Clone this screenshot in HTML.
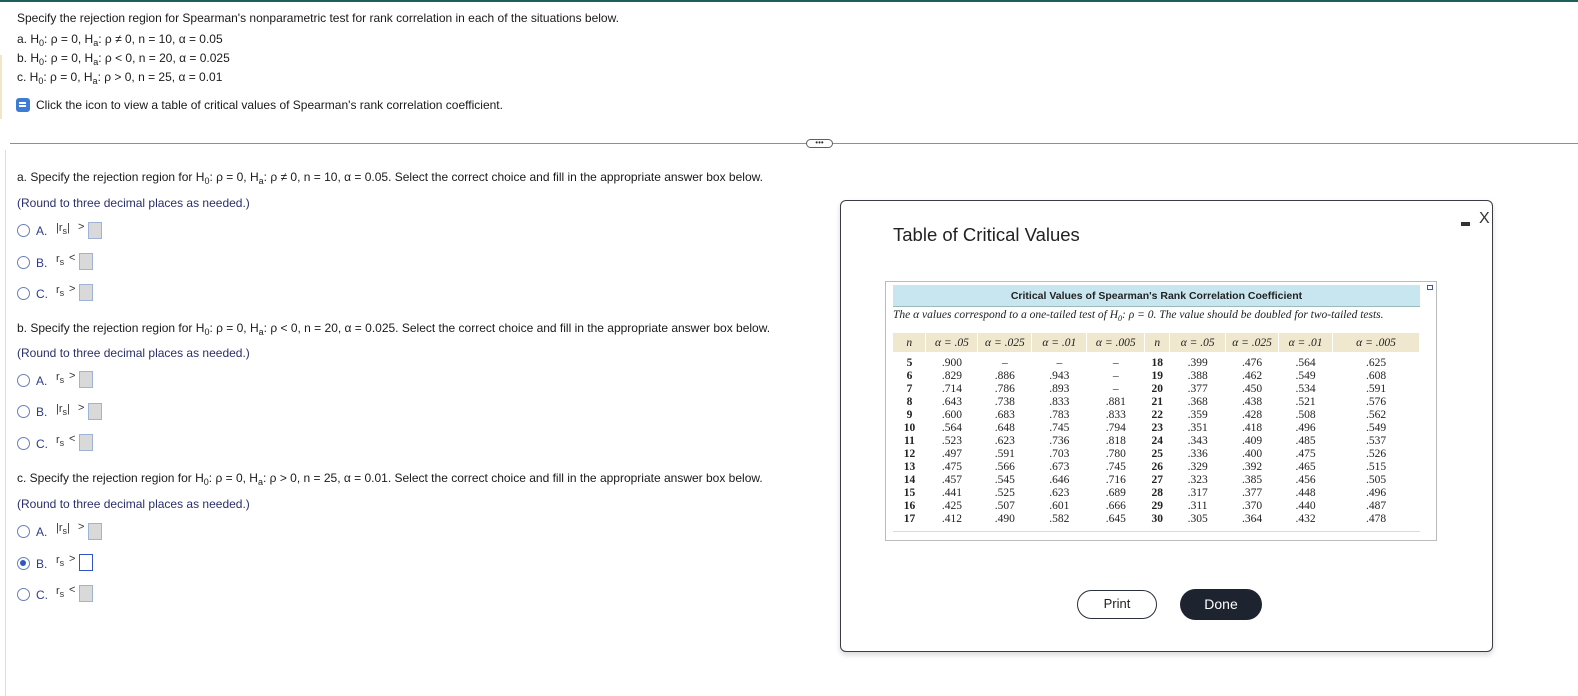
<!DOCTYPE html>
<html><head><meta charset="utf-8"><style>
*{margin:0;padding:0;box-sizing:border-box}
body{width:1578px;height:696px;position:relative;background:#fff;font-family:"Liberation Sans",Arial,sans-serif;font-size:12px;color:#1a1a1a;overflow:hidden}
.a{position:absolute;white-space:nowrap}
sub{font-size:9px;vertical-align:-3px}
.blue{color:#2a2f6a}
.radio{position:absolute;width:13px;height:13px;border:1.5px solid #6b7fb8;border-radius:50%}
.radio.on::after{content:"";position:absolute;left:2px;top:2px;width:6px;height:6px;border-radius:50%;background:#2f56c4}
.lbl{position:absolute;color:#2d3a8c;font-size:12px}
.box{position:absolute;width:14px;height:17px;background:#d9d9d9;border:1px solid #9fb3d6}
.box.w{background:#fff;border:1.5px solid #2f56c4}
.rs{position:absolute;font-size:11px;color:#333}
table{border-collapse:collapse;font-family:"Liberation Serif",serif;font-size:11.5px;color:#222}
td{text-align:center;padding:0;height:13px;line-height:13px}
th{font-weight:normal;font-style:italic;font-size:11.5px;height:19px;background:#efe8cf;border-right:1px solid #fff}
</style></head><body>
<div class="a" style="left:0;top:0;width:1578px;height:2px;background:#1f5f5a"></div>
<div class="a" style="left:0;top:55px;width:2px;height:64px;background:#f1e6c5"></div>
<div class="a" style="left:5px;top:150px;width:1px;height:546px;background:#ddd"></div>
<div class="a" style="left:17px;top:11px">Specify the rejection region for Spearman's nonparametric test for rank correlation in each of the situations below.</div>
<div class="a" style="left:17px;top:32px">a. H<sub>0</sub>: ρ = 0, H<sub>a</sub>: ρ ≠ 0, n = 10, α = 0.05</div>
<div class="a" style="left:17px;top:51px">b. H<sub>0</sub>: ρ = 0, H<sub>a</sub>: ρ &lt; 0, n = 20, α = 0.025</div>
<div class="a" style="left:17px;top:70px">c. H<sub>0</sub>: ρ = 0, H<sub>a</sub>: ρ &gt; 0, n = 25, α = 0.01</div>
<div class="a" style="left:16px;top:98px;width:14px;height:14px;background:#3f7ad6;border-radius:3px"><div style="margin:4px 3px;width:7px;height:1.5px;background:#fff;box-shadow:0 3px 0 #fff"></div></div>
<div class="a" style="left:36px;top:98px">Click the icon to view a table of critical values of Spearman's rank correlation coefficient.</div>
<div class="a" style="left:10px;top:143px;width:1568px;height:1px;background:#8a8f99"></div>
<div class="a" style="left:806px;top:139px;width:27px;height:9px;border:1px solid #56606e;border-radius:5px;background:#fff;font-size:8px;line-height:5px;text-align:center;color:#333">•••</div>

<div class="a" style="left:17px;top:170px">a. Specify the rejection region for H<sub>0</sub>: ρ = 0, H<sub>a</sub>: ρ ≠ 0, n = 10, α = 0.05. Select the correct choice and fill in the appropriate answer box below.</div>
<div class="a blue" style="left:17px;top:196px">(Round to three decimal places as needed.)</div>
<div class="radio" style="left:17px;top:224px"></div><div class="lbl" style="left:36px;top:224px">A.</div><div class="rs" style="left:56px;top:222px">|r<sub>s</sub>|</div><div class="rs" style="left:78px;top:221px">&gt;</div><div class="box" style="left:88px;top:222px"></div>
<div class="radio" style="left:17px;top:256px"></div><div class="lbl" style="left:36px;top:256px">B.</div><div class="rs" style="left:56px;top:253px">r<sub>s</sub></div><div class="rs" style="left:69px;top:252px">&lt;</div><div class="box" style="left:79px;top:253px"></div>
<div class="radio" style="left:17px;top:287px"></div><div class="lbl" style="left:36px;top:287px">C.</div><div class="rs" style="left:56px;top:284px">r<sub>s</sub></div><div class="rs" style="left:69px;top:283px">&gt;</div><div class="box" style="left:79px;top:284px"></div>
<div class="a" style="left:17px;top:321px">b. Specify the rejection region for H<sub>0</sub>: ρ = 0, H<sub>a</sub>: ρ &lt; 0, n = 20, α = 0.025. Select the correct choice and fill in the appropriate answer box below.</div>
<div class="a blue" style="left:17px;top:346px">(Round to three decimal places as needed.)</div>
<div class="radio" style="left:17px;top:374px"></div><div class="lbl" style="left:36px;top:374px">A.</div><div class="rs" style="left:56px;top:371px">r<sub>s</sub></div><div class="rs" style="left:69px;top:370px">&gt;</div><div class="box" style="left:79px;top:371px"></div>
<div class="radio" style="left:17px;top:405px"></div><div class="lbl" style="left:36px;top:405px">B.</div><div class="rs" style="left:56px;top:403px">|r<sub>s</sub>|</div><div class="rs" style="left:78px;top:402px">&gt;</div><div class="box" style="left:88px;top:403px"></div>
<div class="radio" style="left:17px;top:437px"></div><div class="lbl" style="left:36px;top:437px">C.</div><div class="rs" style="left:56px;top:434px">r<sub>s</sub></div><div class="rs" style="left:69px;top:433px">&lt;</div><div class="box" style="left:79px;top:434px"></div>
<div class="a" style="left:17px;top:471px">c. Specify the rejection region for H<sub>0</sub>: ρ = 0, H<sub>a</sub>: ρ &gt; 0, n = 25, α = 0.01. Select the correct choice and fill in the appropriate answer box below.</div>
<div class="a blue" style="left:17px;top:497px">(Round to three decimal places as needed.)</div>
<div class="radio" style="left:17px;top:525px"></div><div class="lbl" style="left:36px;top:525px">A.</div><div class="rs" style="left:56px;top:522px">|r<sub>s</sub>|</div><div class="rs" style="left:78px;top:521px">&gt;</div><div class="box" style="left:88px;top:523px"></div>
<div class="radio on" style="left:17px;top:557px"></div><div class="lbl" style="left:36px;top:557px">B.</div><div class="rs" style="left:56px;top:554px">r<sub>s</sub></div><div class="rs" style="left:69px;top:553px">&gt;</div><div class="box w" style="left:79px;top:554px"></div>
<div class="radio" style="left:17px;top:588px"></div><div class="lbl" style="left:36px;top:588px">C.</div><div class="rs" style="left:56px;top:585px">r<sub>s</sub></div><div class="rs" style="left:69px;top:584px">&lt;</div><div class="box" style="left:79px;top:585px"></div>

<div class="a" style="left:840px;top:200px;width:653px;height:452px;border:1px solid #3a3d44;border-radius:6px;background:#fff;box-shadow:0 3px 6px rgba(0,0,0,.15)"></div>
<div class="a" style="left:893px;top:224px;font-size:18.5px;color:#222">Table of Critical Values</div>
<div class="a" style="left:1461px;top:222px;width:9px;height:4px;background:#333"></div>
<div class="a" style="left:1479px;top:210px;font-size:16px;color:#333">X</div>
<div class="a" style="left:885px;top:281px;width:552px;height:260px;border:1px solid #bbb"></div>
<div class="a" style="left:1427px;top:285px;width:6px;height:5px;border:1px solid #3a57a8"></div>
<div class="a" style="left:893px;top:285px;width:527px;height:22px;background:#c8e6ef;border-bottom:1px solid #9bb;font-weight:bold;font-size:10.5px;text-align:center;line-height:22px;color:#222">Critical Values of Spearman's Rank Correlation Coefficient</div>
<div class="a" style="left:893px;top:309px;font-family:'Liberation Serif',serif;font-style:italic;font-size:11.5px;color:#222">The α values correspond to a one-tailed test of H<sub style="font-size:8px">0</sub>: ρ = 0. The value should be doubled for two-tailed tests.</div>
<table class="a" style="left:893px;top:333px;width:527px">
<tr><th style="width:33px">n</th><th style="width:52px">α = .05</th><th style="width:54px">α = .025</th><th style="width:55px">α = .01</th><th style="width:58px">α = .005</th><th style="width:25px">n</th><th style="width:56px">α = .05</th><th style="width:53px">α = .025</th><th style="width:54px">α = .01</th><th style="width:87px">α = .005</th></tr>
<tr><td colspan="10" style="height:5px"></td></tr>
<tr><td><b>5</b></td><td>.900</td><td>–</td><td>–</td><td>–</td><td><b>18</b></td><td>.399</td><td>.476</td><td>.564</td><td>.625</td></tr>
<tr><td><b>6</b></td><td>.829</td><td>.886</td><td>.943</td><td>–</td><td><b>19</b></td><td>.388</td><td>.462</td><td>.549</td><td>.608</td></tr>
<tr><td><b>7</b></td><td>.714</td><td>.786</td><td>.893</td><td>–</td><td><b>20</b></td><td>.377</td><td>.450</td><td>.534</td><td>.591</td></tr>
<tr><td><b>8</b></td><td>.643</td><td>.738</td><td>.833</td><td>.881</td><td><b>21</b></td><td>.368</td><td>.438</td><td>.521</td><td>.576</td></tr>
<tr><td><b>9</b></td><td>.600</td><td>.683</td><td>.783</td><td>.833</td><td><b>22</b></td><td>.359</td><td>.428</td><td>.508</td><td>.562</td></tr>
<tr><td><b>10</b></td><td>.564</td><td>.648</td><td>.745</td><td>.794</td><td><b>23</b></td><td>.351</td><td>.418</td><td>.496</td><td>.549</td></tr>
<tr><td><b>11</b></td><td>.523</td><td>.623</td><td>.736</td><td>.818</td><td><b>24</b></td><td>.343</td><td>.409</td><td>.485</td><td>.537</td></tr>
<tr><td><b>12</b></td><td>.497</td><td>.591</td><td>.703</td><td>.780</td><td><b>25</b></td><td>.336</td><td>.400</td><td>.475</td><td>.526</td></tr>
<tr><td><b>13</b></td><td>.475</td><td>.566</td><td>.673</td><td>.745</td><td><b>26</b></td><td>.329</td><td>.392</td><td>.465</td><td>.515</td></tr>
<tr><td><b>14</b></td><td>.457</td><td>.545</td><td>.646</td><td>.716</td><td><b>27</b></td><td>.323</td><td>.385</td><td>.456</td><td>.505</td></tr>
<tr><td><b>15</b></td><td>.441</td><td>.525</td><td>.623</td><td>.689</td><td><b>28</b></td><td>.317</td><td>.377</td><td>.448</td><td>.496</td></tr>
<tr><td><b>16</b></td><td>.425</td><td>.507</td><td>.601</td><td>.666</td><td><b>29</b></td><td>.311</td><td>.370</td><td>.440</td><td>.487</td></tr>
<tr><td><b>17</b></td><td>.412</td><td>.490</td><td>.582</td><td>.645</td><td><b>30</b></td><td>.305</td><td>.364</td><td>.432</td><td>.478</td></tr>
</table>
<div class="a" style="left:893px;top:531px;width:527px;height:1px;background:#cde"></div>
<div class="a" style="left:1077px;top:590px;width:80px;height:29px;border:1.5px solid #2b2f3a;border-radius:15px;text-align:center;line-height:26px;font-size:13px;color:#222">Print</div>
<div class="a" style="left:1180px;top:589px;width:82px;height:31px;background:#1e2330;border-radius:16px;text-align:center;line-height:31px;font-size:14px;color:#fff">Done</div>
</body></html>
